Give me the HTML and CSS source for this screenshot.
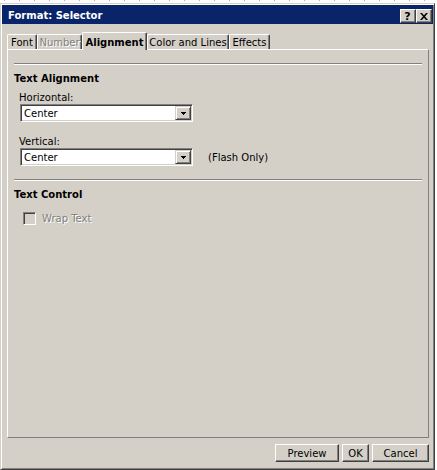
FILE: index.html
```html
<!DOCTYPE html>
<html>
<head>
<meta charset="utf-8">
<link rel="stylesheet" href="styles.css">
</head>
<body>
<div class="topstrip"></div>
<div class="window">
  <div class="titlebar">
    <span class="title">Format: Selector</span>
    <div class="tbtns">
      <span class="tbtn help">?</span>
      <span class="tbtn close"><svg width="8" height="7" viewBox="0 0 8 7"><path d="M0 0h2l2 2.3 2-2.3h2L5 3.5 8 7H6L4 4.7 2 7H0l3-3.5z" fill="#000"/></svg></span>
    </div>
  </div>
  <div class="tabs">
    <div class="tab t-font">Font</div>
    <div class="tab t-number disabled">Number</div>
    <div class="tab t-align active">Alignment</div>
    <div class="tab t-color">Color and Lines</div>
    <div class="tab t-effects">Effects</div>
  </div>
  <div class="panel">
    <div class="sep first"></div>
    <div class="group-title">Text Alignment</div>
    <div class="label">Horizontal:</div>
    <div class="select">
      <span class="value">Center</span>
      <span class="dd"><svg width="5" height="3" viewBox="0 0 5 3"><path d="M0 0h5v1h-1v1h-1v1h-1v-1h-1v-1h-1z" fill="#000"/></svg></span>
    </div>
    <div class="label second">Vertical:</div>
    <div class="select-row">
      <div class="select">
        <span class="value">Center</span>
        <span class="dd"><svg width="5" height="3" viewBox="0 0 5 3"><path d="M0 0h5v1h-1v1h-1v1h-1v-1h-1v-1h-1z" fill="#000"/></svg></span>
      </div>
      <span class="note">(Flash Only)</span>
    </div>
    <div class="sep"></div>
    <div class="group-title">Text Control</div>
    <div class="check-row">
      <span class="checkbox"></span>
      <span class="check-label">Wrap Text</span>
    </div>
  </div>
  <div class="footer">
    <button class="btn b-preview">Preview</button>
    <button class="btn b-ok">OK</button>
    <button class="btn b-cancel">Cancel</button>
  </div>
</div>
</body>
</html>
```
FILE: styles.css
```css
* { box-sizing: border-box; }
html, body {
  margin: 0;
  padding: 0;
  background: #fff;
  width: 437px;
  height: 470px;
  overflow: hidden;
  font-family: "DejaVu Sans", sans-serif;
  font-size: 10px;
  line-height: 13px;
  color: #000;
}
.topstrip {
  height: 3px;
  padding-top: 1px;
  background-image: repeating-linear-gradient(to right, #b0b0b0 0 1px, transparent 1px 15px);
  background-size: 100% 1px;
  background-repeat: no-repeat;
  background-position: 4px 0;
}
.window {
  width: 435px;
  height: 467px;
  background: #d4d0c8;
  border: 1px solid;
  border-color: #d4d0c8 #404040 #404040 #d4d0c8;
  box-shadow: inset 1px 1px 0 #fff, inset -1px -1px 0 #808080;
  padding: 1px;
  display: flex;
  flex-direction: column;
}
.titlebar {
  height: 19px;
  background: #0a246a;
  display: flex;
  align-items: flex-start;
  justify-content: space-between;
  padding: 0 1px 0 6px;
}
.title {
  color: #fff;
  font-weight: bold;
  margin-top: 4px;
}
.tbtns {
  display: flex;
  margin-top: 4px;
}
.tbtn {
  width: 16px;
  height: 14px;
  background: #d4d0c8;
  border: 1px solid;
  border-color: #fff #404040 #404040 #fff;
  box-shadow: inset -1px -1px 0 #808080;
  display: flex;
  align-items: center;
  justify-content: center;
}
.help {
  font-weight: bold;
  font-size: 11px;
  line-height: 11px;
  padding-right: 1px;
}
.close svg { display: block; margin-left: -1px; }
.tabs {
  margin-top: 8px;
  height: 17px;
  padding-left: 5px;
  display: flex;
  align-items: flex-end;
}
.tab {
  height: 15px;
  padding-top: 1px;
  text-align: center;
  white-space: nowrap;
  border-top: 1px solid #fff;
  border-left: 1px solid #fff;
  border-right: 1px solid #404040;
  box-shadow: inset -1px 0 0 #808080;
  border-radius: 2px 2px 0 0;
}
.t-font { width: 30px; }
.t-number { width: 45px; }
.t-align { width: 65px; }
.t-color { width: 82px; }
.t-effects { width: 41px; }
.tab.disabled {
  color: #808080;
  text-shadow: 1px 1px 0 #fff;
}
.tab.active {
  height: 18px;
  padding-top: 3px;
  margin-bottom: -1px;
  font-weight: bold;
  background: #d4d0c8;
  position: relative;
  z-index: 1;
}
.panel {
  flex: 1;
  margin: 0 4px 0 5px;
  border: 1px solid;
  border-color: #fff #808080 #808080 #fff;
  padding: 0 6px;
}
.sep {
  height: 2px;
  border-top: 1px solid #808080;
  border-bottom: 1px solid #fff;
  margin-top: 13px;
}
.group-title {
  font-weight: bold;
  margin-top: 7px;
}
.label {
  padding-left: 5px;
  margin-top: 6px;
}
.label.second { margin-top: 13px; }
.select {
  width: 173px;
  height: 18px;
  margin-left: 6px;
  background: #fff;
  border: 1px solid;
  border-color: #808080 #fff #fff #808080;
  box-shadow: inset 1px 1px 0 #404040, inset -1px -1px 0 #d4d0c8;
  padding: 1px;
  display: flex;
  align-items: center;
  justify-content: space-between;
}
.value { padding-left: 2px; }
.dd {
  width: 16px;
  height: 14px;
  background: #d4d0c8;
  border: 1px solid;
  border-color: #d4d0c8 #404040 #404040 #d4d0c8;
  box-shadow: inset 1px 1px 0 #fff, inset -1px -1px 0 #808080;
  display: flex;
  align-items: center;
  justify-content: center;
}
.dd svg { display: block; }
.select-row {
  display: flex;
  align-items: center;
  gap: 15px;
}
.check-row {
  margin-top: 11px;
  display: flex;
  align-items: center;
  padding-left: 9px;
  gap: 6px;
}
.checkbox {
  width: 13px;
  height: 13px;
  border: 1px solid;
  border-color: #808080 #fff #fff #808080;
  box-shadow: inset 1px 1px 0 #404040, inset -1px -1px 0 #d4d0c8;
  background: #d4d0c8;
}
.check-label {
  color: #808080;
  text-shadow: 1px 1px 0 #fff;
}
.footer {
  margin-top: 6px;
  padding: 0 4px 6px 0;
  display: flex;
  justify-content: flex-end;
  gap: 3px;
}
.btn {
  height: 18px;
  font-family: "DejaVu Sans", sans-serif;
  font-size: 10px;
  line-height: 13px;
  color: #000;
  background: #d4d0c8;
  border: 1px solid;
  border-color: #fff #404040 #404040 #fff;
  box-shadow: inset -1px -1px 0 #808080;
  padding: 0;
  margin: 0;
}
.b-preview { width: 64px; }
.b-ok { width: 27px; }
.b-cancel { width: 57px; }
```
